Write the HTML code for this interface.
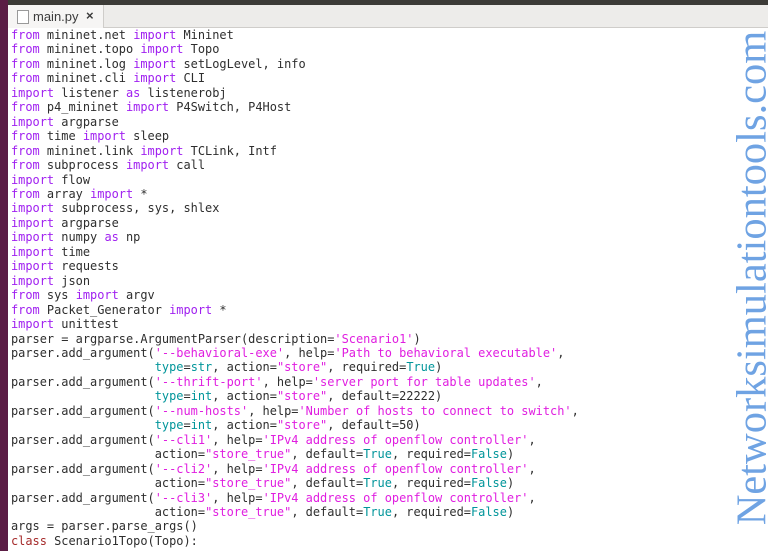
<!DOCTYPE html><html><head><style>
body{margin:0;width:768px;height:551px;overflow:hidden;background:#fff;position:relative;font-family:"Liberation Sans",sans-serif}
#top{position:absolute;left:0;top:0;width:768px;height:5px;background:#3c3b37}
#left{position:absolute;left:0;top:0;width:8px;height:551px;background:#5b1d45}
#tabs{position:absolute;left:8px;top:5px;width:760px;height:22px;background:#edecea;border-bottom:1px solid #cfcdca}
#tab{position:absolute;left:0;top:0;width:95px;height:23px;background:#f6f5f4;border-right:1px solid #cfcdca;font-size:13px;color:#3c3c3c}
#code{position:absolute;left:11px;top:28px;font-family:"DejaVu Sans Mono",monospace;font-size:11.95px;line-height:14.46px;color:#2e2e2e;white-space:pre}
.k{color:#a020f0}.s{color:#e01ee0}.t{color:#00959a}.c{color:#a52a2a}
#wm{position:absolute;left:752px;top:278px;transform:translate(-50%,-50%) rotate(-90deg);font-family:"Liberation Serif",serif;font-size:42.5px;color:#6fa3e3;white-space:nowrap}
</style></head><body>
<div id="top"></div><div id="left"></div>
<div id="tabs"><div id="tab"><span style="position:absolute;left:9px;top:5px;width:10px;height:12px;border:1px solid #999;background:#fff"></span><span style="position:absolute;left:25px;top:4px">main.py</span><span style="position:absolute;left:78px;top:3px;font-weight:bold">×</span></div></div>
<div id="code"><span class="k">from</span> mininet.net <span class="k">import</span> Mininet
<span class="k">from</span> mininet.topo <span class="k">import</span> Topo
<span class="k">from</span> mininet.log <span class="k">import</span> setLogLevel, info
<span class="k">from</span> mininet.cli <span class="k">import</span> CLI
<span class="k">import</span> listener <span class="k">as</span> listenerobj
<span class="k">from</span> p4_mininet <span class="k">import</span> P4Switch, P4Host
<span class="k">import</span> argparse
<span class="k">from</span> time <span class="k">import</span> sleep
<span class="k">from</span> mininet.link <span class="k">import</span> TCLink, Intf
<span class="k">from</span> subprocess <span class="k">import</span> call
<span class="k">import</span> flow
<span class="k">from</span> array <span class="k">import</span> *
<span class="k">import</span> subprocess, sys, shlex
<span class="k">import</span> argparse
<span class="k">import</span> numpy <span class="k">as</span> np
<span class="k">import</span> time
<span class="k">import</span> requests
<span class="k">import</span> json
<span class="k">from</span> sys <span class="k">import</span> argv
<span class="k">from</span> Packet_Generator <span class="k">import</span> *
<span class="k">import</span> unittest
parser = argparse.ArgumentParser(description=<span class="s">'Scenario1'</span>)
parser.add_argument(<span class="s">'--behavioral-exe'</span>, help=<span class="s">'Path to behavioral executable'</span>,
                    <span class="t">type</span>=<span class="t">str</span>, action=<span class="s">"store"</span>, required=<span class="t">True</span>)
parser.add_argument(<span class="s">'--thrift-port'</span>, help=<span class="s">'server port for table updates'</span>,
                    <span class="t">type</span>=<span class="t">int</span>, action=<span class="s">"store"</span>, default=22222)
parser.add_argument(<span class="s">'--num-hosts'</span>, help=<span class="s">'Number of hosts to connect to switch'</span>,
                    <span class="t">type</span>=<span class="t">int</span>, action=<span class="s">"store"</span>, default=50)
parser.add_argument(<span class="s">'--cli1'</span>, help=<span class="s">'IPv4 address of openflow controller'</span>,
                    action=<span class="s">"store_true"</span>, default=<span class="t">True</span>, required=<span class="t">False</span>)
parser.add_argument(<span class="s">'--cli2'</span>, help=<span class="s">'IPv4 address of openflow controller'</span>,
                    action=<span class="s">"store_true"</span>, default=<span class="t">True</span>, required=<span class="t">False</span>)
parser.add_argument(<span class="s">'--cli3'</span>, help=<span class="s">'IPv4 address of openflow controller'</span>,
                    action=<span class="s">"store_true"</span>, default=<span class="t">True</span>, required=<span class="t">False</span>)
args = parser.parse_args()
<span class="c">class</span> Scenario1Topo(Topo):</div>
<div id="wm">Networksimulationtools.com</div>
</body></html>
